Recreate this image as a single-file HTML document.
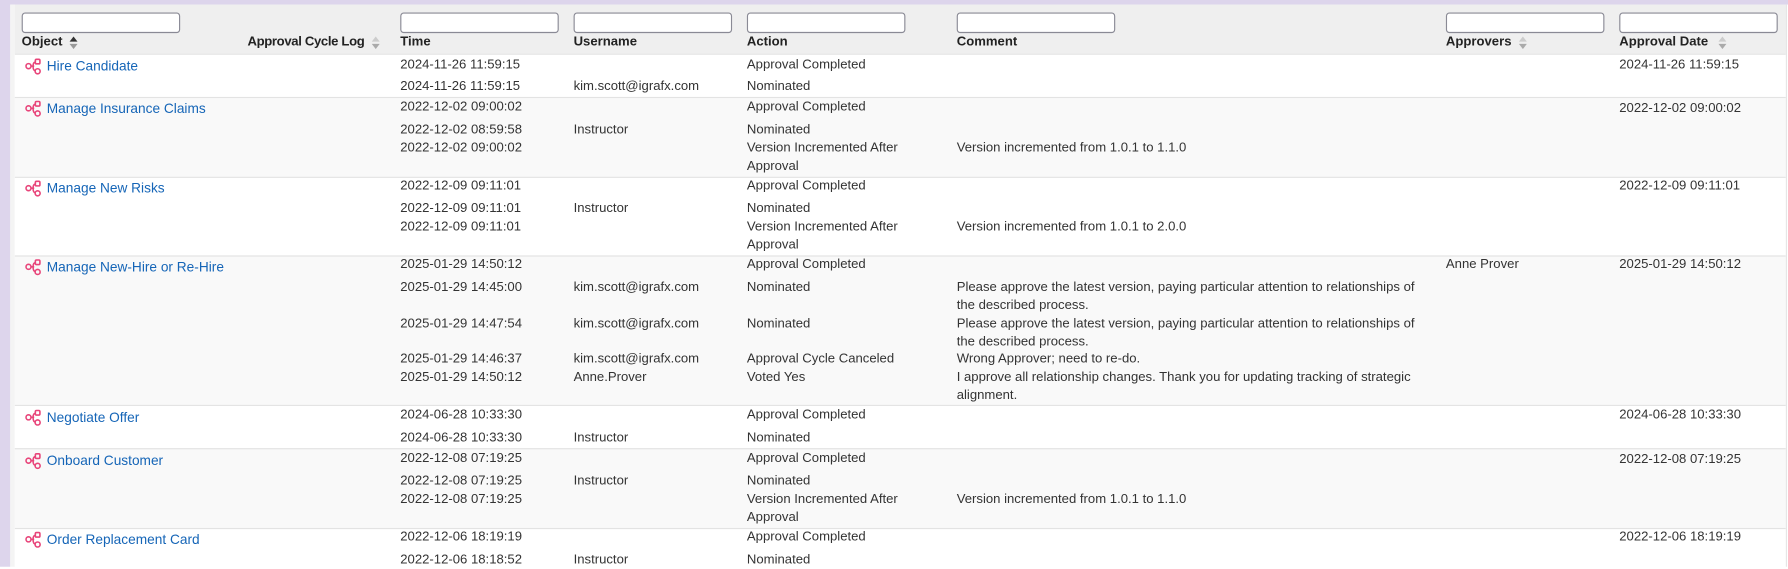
<!DOCTYPE html>
<html><head><meta charset="utf-8"><style>
*{margin:0;padding:0;box-sizing:border-box}
html,body{width:1788px;height:567px;overflow:hidden;background:#fff}
body{font-family:"Liberation Sans",sans-serif;font-size:11.5px;color:#333}
#w{position:absolute;left:0;top:0;width:1568px;height:497px;transform:scale(1.14031);transform-origin:0 0}
.lav{position:absolute;background:#ddd5ec}
.t{position:absolute;white-space:nowrap;line-height:16px}
.h{font-weight:bold;color:#222;font-size:11.5px}
.n{color:#1565b7;font-size:12px}
.in{position:absolute;top:11px;height:18px;width:139px;border:1px solid #8a8a95;border-radius:3px;background:#fff}
.row{position:absolute;left:13px;width:1553px;border-top:1px solid #e3e3e3}
.s{position:absolute;width:7px;height:11px}
</style></head><body><div id="w">
<div class="lav" style="left:0;top:0;width:1568px;height:4px"></div>
<div class="lav" style="left:0;top:0;width:9px;height:497px"></div>
<div style="position:absolute;left:9px;top:4px;width:4px;height:493px;background:#f4f4f4"></div>
<div style="position:absolute;left:13px;top:4px;width:1553px;height:43px;background:#efefef"></div>
<div style="position:absolute;left:1566px;top:4px;width:1px;height:493px;background:#e3e3e3"></div>
<div class="row" style="top:47px;height:38px;background:#fff"></div>
<div class="row" style="top:85px;height:70px;background:#f9f9f9"></div>
<div class="row" style="top:155px;height:69px;background:#fff"></div>
<div class="row" style="top:224px;height:131px;background:#f9f9f9"></div>
<div class="row" style="top:355px;height:38px;background:#fff"></div>
<div class="row" style="top:393px;height:70px;background:#f9f9f9"></div>
<div class="row" style="top:463px;height:34px;background:#fff"></div>

<div class="in" style="left:19px"></div><div class="in" style="left:351px"></div><div class="in" style="left:503px"></div><div class="in" style="left:655px"></div><div class="in" style="left:839px"></div><div class="in" style="left:1268px"></div><div class="in" style="left:1420px"></div>

<div class="t h" style="left:19px;top:29px">Object</div>
<svg class="s" style="left:61px;top:32px" viewBox="0 0 7 11"><path d="M0 4.5L3.5 0L7 4.5Z" fill="#333"/><path d="M0 6.5L3.5 11L7 6.5Z" fill="#999"/></svg>
<div class="t h" style="left:217px;top:29px;letter-spacing:-0.3px">Approval Cycle Log</div>
<svg class="s" style="left:326px;top:32px" viewBox="0 0 7 11"><path d="M0 4.5L3.5 0L7 4.5Z" fill="#ccc"/><path d="M0 6.5L3.5 11L7 6.5Z" fill="#aaa"/></svg>
<div class="t h" style="left:351px;top:29px">Time</div>
<div class="t h" style="left:503px;top:29px">Username</div>
<div class="t h" style="left:655px;top:29px">Action</div>
<div class="t h" style="left:839px;top:29px">Comment</div>
<div class="t h" style="left:1268px;top:29px">Approvers</div>
<svg class="s" style="left:1332px;top:32px" viewBox="0 0 7 11"><path d="M0 4.5L3.5 0L7 4.5Z" fill="#ccc"/><path d="M0 6.5L3.5 11L7 6.5Z" fill="#aaa"/></svg>
<div class="t h" style="left:1420px;top:29px">Approval Date</div>
<svg class="s" style="left:1507px;top:32px" viewBox="0 0 7 11"><path d="M0 4.5L3.5 0L7 4.5Z" fill="#ccc"/><path d="M0 6.5L3.5 11L7 6.5Z" fill="#aaa"/></svg>

<svg width="0" height="0" style="position:absolute"><defs><g id="ic" fill="none" stroke="#e8457a" stroke-width="1.4"><circle cx="3" cy="7" r="2.2"/><rect x="9" y="1" width="4" height="4" rx="1"/><circle cx="11" cy="11.5" r="2.2"/><path d="M5.2 7H8M9 3.5Q7 3.5 7 7Q7 11 9 11"/></g></defs></svg>

<svg style="position:absolute;left:22px;top:51px" width="15" height="15"><use href="#ic"/></svg>
<div class="t n" style="left:41px;top:50px">Hire Candidate</div>
<div class="t" style="left:351px;top:49px">2024-11-26 11:59:15</div><div class="t" style="left:655px;top:49px">Approval Completed</div><div class="t" style="left:1420px;top:49px">2024-11-26 11:59:15</div>
<div class="t" style="left:351px;top:68px">2024-11-26 11:59:15</div><div class="t" style="left:503px;top:68px">kim.scott@igrafx.com</div><div class="t" style="left:655px;top:68px">Nominated</div>

<svg style="position:absolute;left:22px;top:88px" width="15" height="15"><use href="#ic"/></svg>
<div class="t n" style="left:41px;top:87px">Manage Insurance Claims</div>
<div class="t" style="left:351px;top:86px">2022-12-02 09:00:02</div><div class="t" style="left:655px;top:86px">Approval Completed</div><div class="t" style="left:1420px;top:87px">2022-12-02 09:00:02</div>
<div class="t" style="left:351px;top:106px">2022-12-02 08:59:58</div><div class="t" style="left:503px;top:106px">Instructor</div><div class="t" style="left:655px;top:106px">Nominated</div>
<div class="t" style="left:351px;top:122px">2022-12-02 09:00:02</div><div class="t" style="left:655px;top:122px">Version Incremented After<br>Approval</div><div class="t" style="left:839px;top:122px">Version incremented from 1.0.1 to 1.1.0</div>

<svg style="position:absolute;left:22px;top:158px" width="15" height="15"><use href="#ic"/></svg>
<div class="t n" style="left:41px;top:157px">Manage New Risks</div>
<div class="t" style="left:351px;top:155px">2022-12-09 09:11:01</div><div class="t" style="left:655px;top:155px">Approval Completed</div><div class="t" style="left:1420px;top:155px">2022-12-09 09:11:01</div>
<div class="t" style="left:351px;top:175px">2022-12-09 09:11:01</div><div class="t" style="left:503px;top:175px">Instructor</div><div class="t" style="left:655px;top:175px">Nominated</div>
<div class="t" style="left:351px;top:191px">2022-12-09 09:11:01</div><div class="t" style="left:655px;top:191px">Version Incremented After<br>Approval</div><div class="t" style="left:839px;top:191px">Version incremented from 1.0.1 to 2.0.0</div>

<svg style="position:absolute;left:22px;top:227px" width="15" height="15"><use href="#ic"/></svg>
<div class="t n" style="left:41px;top:226px">Manage New-Hire or Re-Hire</div>
<div class="t" style="left:351px;top:224px">2025-01-29 14:50:12</div><div class="t" style="left:655px;top:224px">Approval Completed</div><div class="t" style="left:1268px;top:224px">Anne Prover</div><div class="t" style="left:1420px;top:224px">2025-01-29 14:50:12</div>
<div class="t" style="left:351px;top:244px">2025-01-29 14:45:00</div><div class="t" style="left:503px;top:244px">kim.scott@igrafx.com</div><div class="t" style="left:655px;top:244px">Nominated</div><div class="t" style="left:839px;top:244px">Please approve the latest version, paying particular attention to relationships of<br>the described process.</div>
<div class="t" style="left:351px;top:276px">2025-01-29 14:47:54</div><div class="t" style="left:503px;top:276px">kim.scott@igrafx.com</div><div class="t" style="left:655px;top:276px">Nominated</div><div class="t" style="left:839px;top:276px">Please approve the latest version, paying particular attention to relationships of<br>the described process.</div>
<div class="t" style="left:351px;top:307px">2025-01-29 14:46:37</div><div class="t" style="left:503px;top:307px">kim.scott@igrafx.com</div><div class="t" style="left:655px;top:307px">Approval Cycle Canceled</div><div class="t" style="left:839px;top:307px">Wrong Approver; need to re-do.</div>
<div class="t" style="left:351px;top:323px">2025-01-29 14:50:12</div><div class="t" style="left:503px;top:323px">Anne.Prover</div><div class="t" style="left:655px;top:323px">Voted Yes</div><div class="t" style="left:839px;top:323px">I approve all relationship changes. Thank you for updating tracking of strategic<br>alignment.</div>

<svg style="position:absolute;left:22px;top:359px" width="15" height="15"><use href="#ic"/></svg>
<div class="t n" style="left:41px;top:358px">Negotiate Offer</div>
<div class="t" style="left:351px;top:356px">2024-06-28 10:33:30</div><div class="t" style="left:655px;top:356px">Approval Completed</div><div class="t" style="left:1420px;top:356px">2024-06-28 10:33:30</div>
<div class="t" style="left:351px;top:376px">2024-06-28 10:33:30</div><div class="t" style="left:503px;top:376px">Instructor</div><div class="t" style="left:655px;top:376px">Nominated</div>

<svg style="position:absolute;left:22px;top:397px" width="15" height="15"><use href="#ic"/></svg>
<div class="t n" style="left:41px;top:396px">Onboard Customer</div>
<div class="t" style="left:351px;top:394px">2022-12-08 07:19:25</div><div class="t" style="left:655px;top:394px">Approval Completed</div><div class="t" style="left:1420px;top:395px">2022-12-08 07:19:25</div>
<div class="t" style="left:351px;top:414px">2022-12-08 07:19:25</div><div class="t" style="left:503px;top:414px">Instructor</div><div class="t" style="left:655px;top:414px">Nominated</div>
<div class="t" style="left:351px;top:430px">2022-12-08 07:19:25</div><div class="t" style="left:655px;top:430px">Version Incremented After<br>Approval</div><div class="t" style="left:839px;top:430px">Version incremented from 1.0.1 to 1.1.0</div>

<svg style="position:absolute;left:22px;top:466px" width="15" height="15"><use href="#ic"/></svg>
<div class="t n" style="left:41px;top:465px">Order Replacement Card</div>
<div class="t" style="left:351px;top:463px">2022-12-06 18:19:19</div><div class="t" style="left:655px;top:463px">Approval Completed</div><div class="t" style="left:1420px;top:463px">2022-12-06 18:19:19</div>
<div class="t" style="left:351px;top:483px">2022-12-06 18:18:52</div><div class="t" style="left:503px;top:483px">Instructor</div><div class="t" style="left:655px;top:483px">Nominated</div>
</div></body></html>
